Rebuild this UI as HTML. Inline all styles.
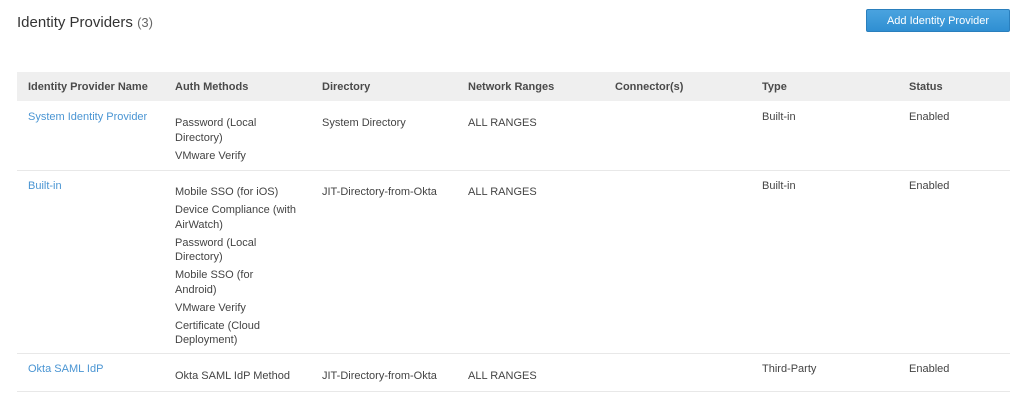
<!DOCTYPE html>
<html><head><meta charset="utf-8"><style>
*{margin:0;padding:0;box-sizing:border-box}
body{width:1022px;height:408px;background:#fff;font-family:"Liberation Sans",Arial,sans-serif;color:#444;position:relative;overflow:hidden;font-size:11px}
.a{position:absolute;white-space:nowrap;line-height:14.5px}
h1{position:absolute;left:17px;top:14px;font-size:15px;font-weight:normal;color:#333}
h1 span{color:#666;font-size:13px}
.btn{position:absolute;left:866px;top:9px;width:144px;height:23px;background:linear-gradient(#4aa3df,#2f8fd2);border:1px solid #2a7fbd;border-radius:2px;color:#fff;font-size:11px;text-align:center;line-height:23px}
.hdr{position:absolute;left:17px;top:72px;width:993px;height:29px;background:#efefef}
.th{font-weight:bold;color:#4a4a4a;top:80px}
.line{position:absolute;left:17px;width:993px;height:1px;background:#e8e8e8}
.lk{color:#4a95d3}
.it{margin-bottom:3.5px}
</style></head><body>
<h1>Identity Providers <span>(3)</span></h1>
<div class="btn">Add Identity Provider</div>
<div class="hdr"></div>
<div class="a th" style="left:28px">Identity Provider Name</div>
<div class="a th" style="left:175px">Auth Methods</div>
<div class="a th" style="left:322px">Directory</div>
<div class="a th" style="left:468px">Network Ranges</div>
<div class="a th" style="left:615px">Connector(s)</div>
<div class="a th" style="left:762px">Type</div>
<div class="a th" style="left:909px">Status</div>

<div class="a lk" style="left:28px;top:110px">System Identity Provider</div>
<div class="a" style="left:175px;top:116px"><div class="it">Password (Local<br>Directory)</div><div class="it">VMware Verify</div></div>
<div class="a" style="left:322px;top:116px">System Directory</div>
<div class="a" style="left:468px;top:116px">ALL RANGES</div>
<div class="a" style="left:762px;top:110px">Built-in</div>
<div class="a" style="left:909px;top:110px">Enabled</div>
<div class="line" style="top:170px"></div>

<div class="a lk" style="left:28px;top:179px">Built-in</div>
<div class="a" style="left:175px;top:185px">
<div class="it">Mobile SSO (for iOS)</div>
<div class="it">Device Compliance (with<br>AirWatch)</div>
<div class="it">Password (Local<br>Directory)</div>
<div class="it">Mobile SSO (for<br>Android)</div>
<div class="it">VMware Verify</div>
<div class="it">Certificate (Cloud<br>Deployment)</div></div>
<div class="a" style="left:322px;top:185px">JIT-Directory-from-Okta</div>
<div class="a" style="left:468px;top:185px">ALL RANGES</div>
<div class="a" style="left:762px;top:179px">Built-in</div>
<div class="a" style="left:909px;top:179px">Enabled</div>
<div class="line" style="top:353px"></div>

<div class="a lk" style="left:28px;top:362px">Okta SAML IdP</div>
<div class="a" style="left:175px;top:369px">Okta SAML IdP Method</div>
<div class="a" style="left:322px;top:369px">JIT-Directory-from-Okta</div>
<div class="a" style="left:468px;top:369px">ALL RANGES</div>
<div class="a" style="left:762px;top:362px">Third-Party</div>
<div class="a" style="left:909px;top:362px">Enabled</div>
<div class="line" style="top:391px"></div>
</body></html>
